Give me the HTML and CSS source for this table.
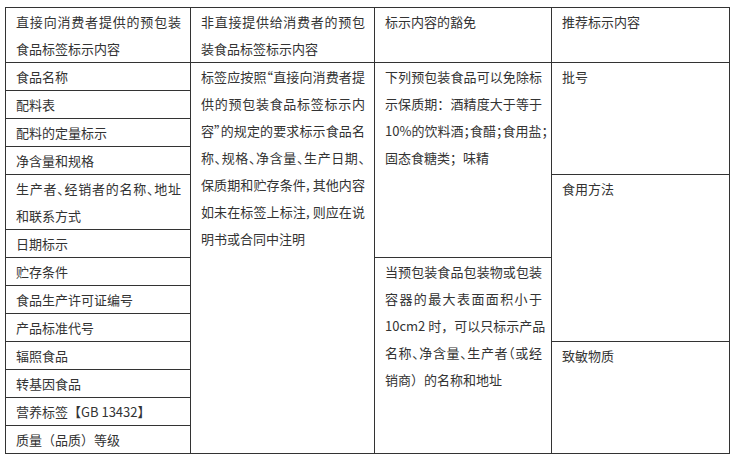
FILE: index.html
```html
<!DOCTYPE html>
<html lang="zh-CN">
<head>
<meta charset="utf-8">
<title>预包装食品标签标示内容</title>
<link rel="stylesheet" href="styles.css">
</head>
<body>
<table class="grid">
  <colgroup>
    <col class="c1"><col class="c2"><col class="c3"><col class="c4">
  </colgroup>
  <thead>
    <tr class="head">
      <th><span class="ln">直接向消费者提供的预包装</span><span class="ln end">食品标签标示内容</span></th>
      <th><span class="ln">非直接提供给消费者的预包</span><span class="ln end">装食品标签标示内容</span></th>
      <th>标示内容的豁免</th>
      <th>推荐标示内容</th>
    </tr>
  </thead>
  <tbody>
    <tr>
      <td>食品名称</td>
      <td rowspan="14"><span class="ln tight">标签应按照“直接向消费者提</span><span class="ln">供的预包装食品标签标示内</span><span class="ln tight">容”的规定的要求标示食品名</span><span class="ln tight">称、规格、净含量、生产日期、</span><span class="ln">保质期和贮存条件, 其他内容</span><span class="ln">如未在标签上标注, 则应在说</span><span class="ln end">明书或合同中注明</span></td>
      <td rowspan="7"><span class="ln">下列预包装食品可以免除标</span><span class="ln">示保质期：酒精度大于等于</span><span class="ln tight">10%的饮料酒；食醋；食用盐；</span><span class="ln end">固态食糖类；味精</span></td>
      <td rowspan="4">批号</td>
    </tr>
    <tr><td>配料表</td></tr>
    <tr><td>配料的定量标示</td></tr>
    <tr><td>净含量和规格</td></tr>
    <tr><td rowspan="2"><span class="ln tight">生产者、经销者的名称、地址</span><span class="ln end">和联系方式</span></td><td rowspan="6">食用方法</td></tr>
    <tr></tr>
    <tr><td>日期标示</td></tr>
    <tr><td>贮存条件</td><td rowspan="7"><span class="ln">当预包装食品包装物或包装</span><span class="ln">容器的最大表面面积小于</span><span class="ln">10cm2 时，可以只标示产品</span><span class="ln tight">名称、净含量、生产者（或经</span><span class="ln end">销商）的名称和地址</span></td></tr>
    <tr><td>食品生产许可证编号</td></tr>
    <tr><td>产品标准代号</td></tr>
    <tr><td>辐照食品</td><td rowspan="4">致敏物质</td></tr>
    <tr><td>转基因食品</td></tr>
    <tr><td>营养标签【GB 13432】</td></tr>
    <tr><td>质量（品质）等级</td></tr>
  </tbody>
</table>
</body>
</html>
```
FILE: styles.css
```css
html, body {
  margin: 0;
  padding: 0;
  background: #ffffff;
}
body {
  padding: 7px 0 0 5px;
  font-family: "Noto Sans CJK SC", "Noto Sans", sans-serif;
  font-size: 13px;
  color: #333333;
}
.grid {
  border-collapse: collapse;
  table-layout: fixed;
  width: 724px;
  border: 1px solid #333333;
}
.c1 { width: 185px; }
.c2 { width: 184px; }
.c3 { width: 177px; }
.c4 { width: 178px; }
.grid th,
.grid td {
  border: 1px solid #333333;
  padding: 0 9px 0 10px;
  line-height: 27px;
  text-align: left;
  font-weight: normal;
  vertical-align: top;
  white-space: nowrap;
}
.grid tbody td { height: 27px; }
.head th { height: 54px; }
.ln {
  display: block;
  text-align: justify;
  text-align-last: justify;
}
.ln.end {
  text-align-last: left;
}
.tight {
  font-feature-settings: "halt" 1;
}
```
